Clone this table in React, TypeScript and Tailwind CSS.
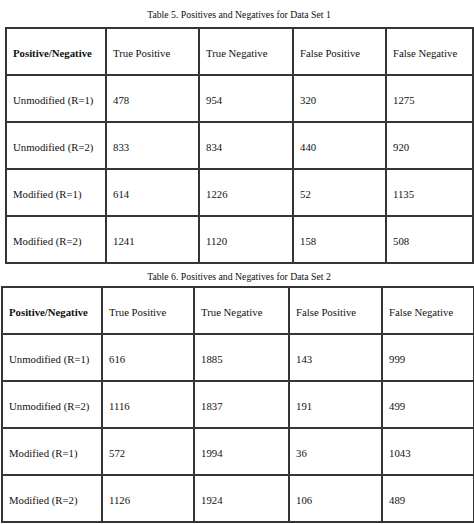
import React from "react";

type Row = { label: string; tp: number; tn: number; fp: number; fn: number };

const set1: Row[] = [
  { label: "Unmodified (R=1)", tp: 478, tn: 954, fp: 320, fn: 1275 },
  { label: "Unmodified (R=2)", tp: 833, tn: 834, fp: 440, fn: 920 },
  { label: "Modified (R=1)", tp: 614, tn: 1226, fp: 52, fn: 1135 },
  { label: "Modified (R=2)", tp: 1241, tn: 1120, fp: 158, fn: 508 },
];

const set2: Row[] = [
  { label: "Unmodified (R=1)", tp: 616, tn: 1885, fp: 143, fn: 999 },
  { label: "Unmodified (R=2)", tp: 1116, tn: 1837, fp: 191, fn: 499 },
  { label: "Modified (R=1)", tp: 572, tn: 1994, fp: 36, fn: 1043 },
  { label: "Modified (R=2)", tp: 1126, tn: 1924, fp: 106, fn: 489 },
];

const cell = "border-2 border-[#353535] h-[47px] align-middle pl-[6px] pt-[3px] text-left font-normal";

function DataTable({ rows, widths, className }: { rows: Row[]; widths: number[]; className: string }) {
  return (
    <table className={`border-collapse table-fixed text-[10.75px] ${className}`}>
      <colgroup>
        {widths.map((w, i) => (
          <col key={i} style={{ width: w }} />
        ))}
      </colgroup>
      <thead>
        <tr>
          <th className={`${cell} !font-bold`}>Positive/Negative</th>
          <th className={cell}>True Positive</th>
          <th className={cell}>True Negative</th>
          <th className={cell}>False Positive</th>
          <th className={cell}>False Negative</th>
        </tr>
      </thead>
      <tbody>
        {rows.map((r) => (
          <tr key={r.label}>
            <td className={cell}>{r.label}</td>
            <td className={cell}>{r.tp}</td>
            <td className={cell}>{r.tn}</td>
            <td className={cell}>{r.fp}</td>
            <td className={cell}>{r.fn}</td>
          </tr>
        ))}
      </tbody>
    </table>
  );
}

export default function App() {
  return (
    <div className="w-[474px] h-[524px] overflow-hidden bg-white text-[#111] pt-[8px] font-['Liberation_Serif',serif]">
      <p className="text-center text-[9.75px] leading-[14px] pl-[4px]">Table 5. Positives and Negatives for Data Set 1</p>
      <DataTable rows={set1} widths={[100, 93, 94, 93, 87]} className="mt-[5px] ml-[5px] w-[467px]" />
      <p className="text-center text-[9.75px] leading-[14px] mt-[6px] pl-[4px]">Table 6. Positives and Negatives for Data Set 2</p>
      <DataTable rows={set2} widths={[100, 92, 95, 93, 92]} className="mt-[2px] ml-[1px] w-[472px]" />
    </div>
  );
}
